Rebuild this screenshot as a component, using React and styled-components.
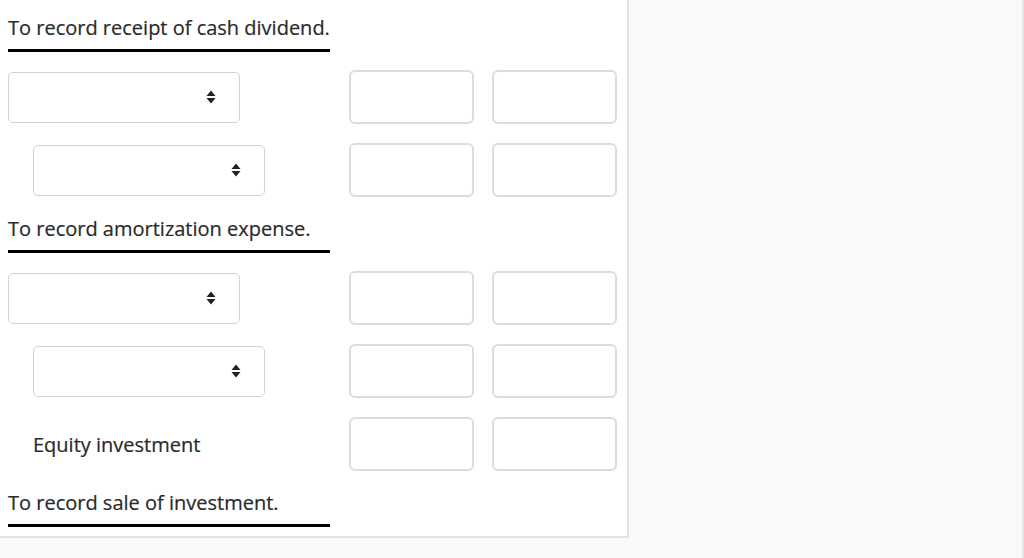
import React from 'react'
import styled, { createGlobalStyle } from 'styled-components'

const GlobalStyle = createGlobalStyle`
  html, body {
    margin: 0;
    padding: 0;
    background: #f9f9f9;
  }
  body {
    font-family: "Open Sans", "Liberation Sans", sans-serif;
    color: #2a2a2a;
  }
`

const Page = styled.div`
  width: 1022px;
  height: 558px;
  border-right: 2px solid #e6e6e6;
  overflow: hidden;
`

const Panel = styled.div`
  width: 619px;
  height: 536px;
  padding-left: 8px;
  background: #fff;
  border-right: 2px solid #e2e2e2;
  border-bottom: 2px solid #e2e2e2;
  display: flex;
  flex-direction: column;
`

const HeadingRow = styled.div`
  height: ${p => p.$height}px;
  display: flex;
  align-items: flex-end;
`

const Heading = styled.div`
  width: 322px;
  font-size: 20px;
  line-height: 27px;
  padding-bottom: 8px;
  border-bottom: 3px solid #000;
  -webkit-text-stroke: 0.2px #2a2a2a;
`

const Entries = styled.div`
  display: flex;
  flex-direction: column;
  gap: 19px;
  padding-top: 18px;
`

const EntryRow = styled.div`
  display: grid;
  grid-template-columns: 323px 125px 125px;
  column-gap: 18px;
  height: 54px;
  align-items: center;
`

const SelectBox = styled.div`
  width: 232px;
  height: 51px;
  margin-left: ${p => (p.$indent ? 25 : 0)}px;
  box-sizing: border-box;
  border: 1.5px solid #d2d2d2;
  border-radius: 5px;
  background: #fff;
  display: flex;
  align-items: center;
  justify-content: flex-end;
  padding-right: 23px;
`

const AccountText = styled.div`
  margin-left: 25px;
  font-size: 20px;
  line-height: 27px;
  -webkit-text-stroke: 0.2px #2a2a2a;
`

const AmountInput = styled.div`
  height: 54px;
  box-sizing: border-box;
  border: 2px solid #dcdcdc;
  border-radius: 6px;
  background: #fff;
`

const SortIcon = () => (
  <svg width="10" height="16" viewBox="0 0 10 16">
    <path d="M0.5 7 L5 1.5 L9.5 7 Z" fill="#222" />
    <path d="M0.5 9 L5 14.5 L9.5 9 Z" fill="#222" />
  </svg>
)

const Entry = ({ indent, label }) => (
  <EntryRow>
    {label ? (
      <AccountText>{label}</AccountText>
    ) : (
      <SelectBox $indent={indent}>
        <SortIcon />
      </SelectBox>
    )}
    <AmountInput />
    <AmountInput />
  </EntryRow>
)

export default function App() {
  return (
    <Page>
      <GlobalStyle />
      <Panel>
        <HeadingRow $height={52}>
          <Heading>To record receipt of cash dividend.</Heading>
        </HeadingRow>
        <Entries>
          <Entry />
          <Entry indent />
        </Entries>
        <HeadingRow $height={56}>
          <Heading>To record amortization expense.</Heading>
        </HeadingRow>
        <Entries>
          <Entry />
          <Entry indent />
          <Entry label="Equity investment" />
        </Entries>
        <HeadingRow $height={56}>
          <Heading>To record sale of investment.</Heading>
        </HeadingRow>
      </Panel>
    </Page>
  )
}
